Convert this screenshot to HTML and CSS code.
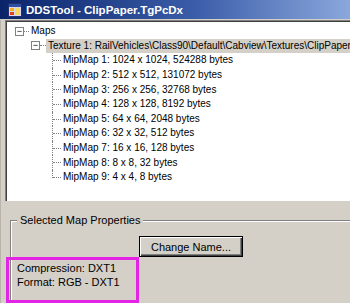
FILE: index.html
```html
<!DOCTYPE html>
<html lang="en">
<head>
    <meta charset="UTF-8">
    <title>DDSTool</title>
    <link rel="stylesheet" href="styles.css">
</head>
<body>
<div class="window">
    <div class="titlebar">
        <svg class="app_icon" width="14" height="14" viewBox="0 0 14 14">
            <rect x="0.5" y="0.5" width="13" height="13" fill="#d8d8e8" stroke="#20306a"/>
            <rect x="1" y="1" width="12" height="3" fill="#3050a8"/>
            <rect x="2" y="5" width="4" height="3" fill="#f0b020"/>
            <rect x="2" y="9" width="4" height="3" fill="#e04020"/>
            <rect x="7" y="5" width="5" height="7" fill="#f8d860"/>
        </svg>
        <span class="title_text">DDSTool - ClipPaper.TgPcDx</span>
    </div>
    <div class="client">
        <div class="tree">
            <div class="row lv0">
                <span class="expander">−</span><span class="dash"></span><span class="label">Maps</span>
            </div>
            <div class="row lv1">
                <span class="expander">−</span><span class="dash"></span><span class="label selected">Texture 1: RailVehicles\Class90\Default\Cabview\Textures\ClipPaper</span>
            </div>
            <div class="row lv2"><span class="branch"></span><span class="label">MipMap 1: 1024 x 1024, 524288 bytes</span></div>
            <div class="row lv2"><span class="branch"></span><span class="label">MipMap 2: 512 x 512, 131072 bytes</span></div>
            <div class="row lv2"><span class="branch"></span><span class="label">MipMap 3: 256 x 256, 32768 bytes</span></div>
            <div class="row lv2"><span class="branch"></span><span class="label">MipMap 4: 128 x 128, 8192 bytes</span></div>
            <div class="row lv2"><span class="branch"></span><span class="label">MipMap 5: 64 x 64, 2048 bytes</span></div>
            <div class="row lv2"><span class="branch"></span><span class="label">MipMap 6: 32 x 32, 512 bytes</span></div>
            <div class="row lv2"><span class="branch"></span><span class="label">MipMap 7: 16 x 16, 128 bytes</span></div>
            <div class="row lv2"><span class="branch"></span><span class="label">MipMap 8: 8 x 8, 32 bytes</span></div>
            <div class="row lv2 last"><span class="branch"></span><span class="label">MipMap 9: 4 x 4, 8 bytes</span></div>
        </div>
        <div class="props">
            <div class="groupbox">
                <div class="legend"><span>Selected Map Properties</span></div>
                <div class="btn_row"><button class="btn">Change Name...</button></div>
                <div class="info">
                    <div>Compression: DXT1</div>
                    <div>Format: RGB - DXT1</div>
                </div>
            </div>
        </div>
    </div>
</div>
</body>
</html>
```

FILE: styles.css
```css
*{
    margin: 0;
    padding: 0;
    box-sizing: border-box;
}
body{
    width: 350px;
    height: 303px;
    overflow: hidden;
    background: #d4d0c8;
    font-family: "Liberation Sans", Arial, sans-serif;
    font-size: 10px;
    color: #000;
}
.window{
    height: 303px;
    display: flex;
    flex-direction: column;
}
.titlebar{
    height: 20px;
    display: flex;
    align-items: center;
    gap: 4px;
    padding-left: 8px;
    background: linear-gradient(to right, #0a246a 0%, #3a5ca8 55%, #8aa8dc 100%);
    border-bottom: 1px solid #d4d0c8;
}
.title_text{
    color: #fff;
    font-weight: bold;
    font-size: 11.5px;
    white-space: nowrap;
}
.client{
    flex: 1;
    display: flex;
    flex-direction: column;
    padding-left: 4px;
    border-left: 1px solid #b8b4ac;
    overflow: hidden;
}
.tree{
    height: 181px;
    background: #fff;
    border-left: 1px solid #808080;
    border-top: 1px solid #808080;
    box-shadow: inset 1px 1px 0 #404040;
    padding-top: 3px;
    overflow: hidden;
    white-space: nowrap;
}
.row{
    height: 14.6px;
    display: flex;
    align-items: center;
    position: relative;
}
.lv0{
    padding-left: 9px;
}
.lv1{
    padding-left: 25px;
}
.lv2{
    padding-left: 46px;
}
.expander{
    width: 9px;
    height: 9px;
    border: 1px solid #808080;
    background: #fff;
    font-size: 9px;
    line-height: 6px;
    text-align: center;
    color: #000;
    flex: none;
}
.dash{
    width: 5px;
    border-top: 1px dotted #808080;
    flex: none;
}
.label{
    padding: 0 2px;
    line-height: 14px;
}
.lv1 .dash{
    width: 6px;
}
.selected{
    background: #d4d0c8;
}
.branch{
    width: 9px;
    height: 100%;
    flex: none;
    align-self: stretch;
    border-left: 1px dotted #808080;
    position: relative;
}
.branch::after{
    content: "";
    position: absolute;
    left: 0;
    top: 7px;
    width: 8px;
    border-top: 1px dotted #808080;
}
.last .branch{
    height: 8px;
    align-self: flex-start;
}
.props{
    flex: 1;
    padding: 12px 0 0 5px;
}
.groupbox{
    height: 100%;
    border-left: 1px solid #808080;
    box-shadow: inset 1px 0 0 #fff;
}
.legend{
    height: 14px;
    display: flex;
    align-items: center;
    border-top: 1px solid #808080;
    box-shadow: inset 0 1px 0 #fff;
    margin-top: 7px;
}
.legend span{
    background: #d4d0c8;
    padding: 0 3px;
    margin-left: 6px;
    margin-top: -15px;
    font-size: 11px;
}
.btn_row{
    padding: 2px 0 0 128px;
}
.btn{
    width: 104px;
    height: 21px;
    font-family: "Liberation Sans", Arial, sans-serif;
    font-size: 11px;
    background: #d4d0c8;
    border: 1px solid #000;
    box-shadow: inset 1px 1px 0 #fff, inset -1px -1px 0 #404040, inset -2px -2px 0 #808080;
    color: #000;
}
.info{
    margin: 0 0 0 -5px;
    width: 133px;
    height: 46px;
    border: 3px solid #e424e4;
    padding: 1px 0 0 8px;
    font-size: 11px;
    line-height: 14px;
}
```
